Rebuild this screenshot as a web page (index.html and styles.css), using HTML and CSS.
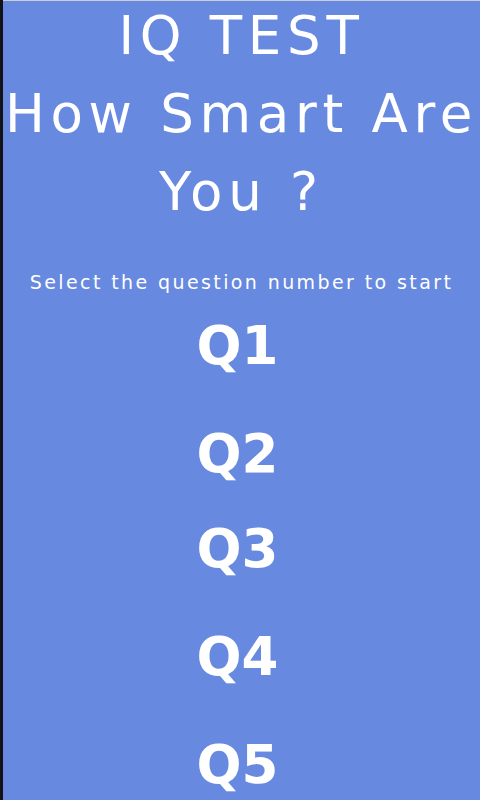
FILE: index.html
```html
<!DOCTYPE html>
<html lang="en">
<head>
<meta charset="utf-8">
<title>IQ Test</title>
<link rel="stylesheet" href="styles.css">
</head>
<body>
<main class="screen">
  <h1 class="title">IQ TEST<br>How Smart Are<br>You ?</h1>
  <p class="hint">Select the question number to start</p>
  <nav class="questions">
    <a class="question" href="#q1">Q1</a>
    <a class="question question--short" href="#q2">Q2</a>
    <a class="question" href="#q3">Q3</a>
    <a class="question" href="#q4">Q4</a>
    <a class="question" href="#q5">Q5</a>
  </nav>
</main>
</body>
</html>
```

FILE: styles.css
```css
html, body {
  margin: 0;
  padding: 0;
  height: 100%;
}

body {
  background: #121417;
  overflow: hidden;
}

.screen {
  margin-left: 3px;
  height: 800px;
  background: #6789e0;
  border-top: 1px solid #c9ccd4;
  box-sizing: border-box;
  color: #ffffff;
  font-family: "DejaVu Sans", sans-serif;
  text-align: center;
  overflow: hidden;
}

.title {
  margin: -4px 0 0;
  font-size: 53px;
  font-weight: normal;
  line-height: 78px;
  letter-spacing: 5.7px;
  white-space: nowrap;
}

.hint {
  margin: 39px 0 0;
  font-size: 19px;
  line-height: 24px;
  letter-spacing: 2.4px;
  white-space: nowrap;
}

.questions {
  display: flex;
  flex-direction: column;
  align-items: center;
  margin-top: -2px;
  padding-right: 8px;
}

.question {
  display: block;
  height: 108px;
  color: #ffffff;
  text-decoration: none;
  font-size: 53px;
  font-weight: bold;
  line-height: 108px;
}

.question--short {
  height: 95px;
}
```
